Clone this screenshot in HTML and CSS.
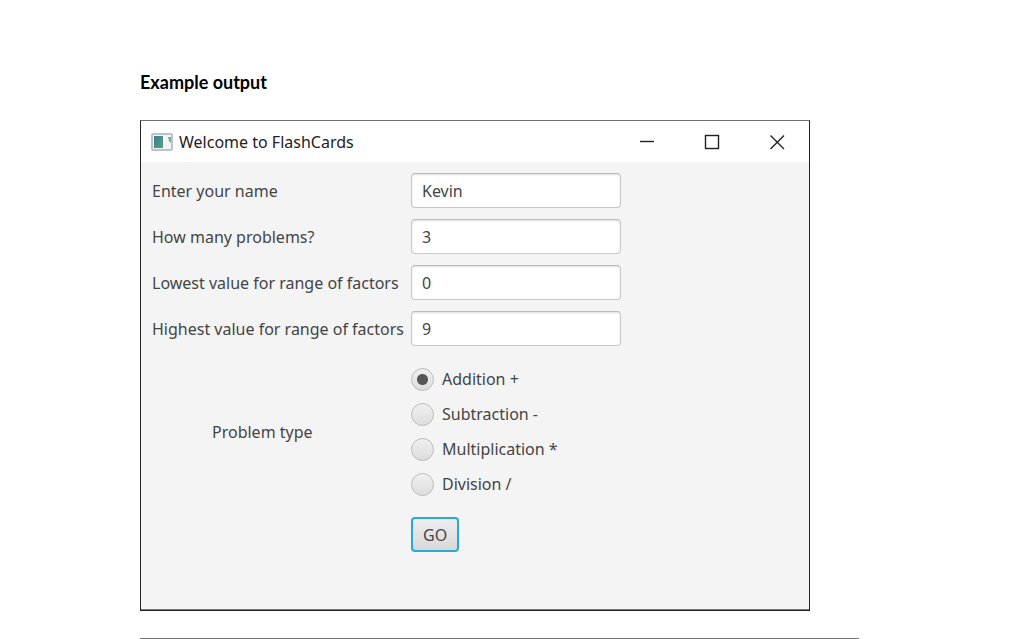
FILE: index.html
```
<!DOCTYPE html>
<html lang="en">
    <head>
        <meta charset="utf-8">
        <title>Welcome to FlashCards</title>

        <link rel="stylesheet" href="styles.css">
    </head>
    <body>
        <div id="page">
            <h1>Example output</h1>
            <div id="window">
                <div id="title_bar">
                    <svg class="app_icon" width="22" height="18" viewBox="0 0 22 18">
                        <defs>
                            <linearGradient id="screen" x1="0" y1="0" x2="1" y2="1">
                                <stop offset="0" stop-color="#3F7C91"/>
                                <stop offset="1" stop-color="#53A481"/>
                            </linearGradient>
                        </defs>
                        <rect x="1" y="1" width="20" height="16" rx="1" fill="#F1F3F5" stroke="#BCC1CA" stroke-width="2"/>
                        <rect x="3" y="3" width="9" height="12" fill="url(#screen)"/>
                        <path d="M17 4H20V10L18 8Z" fill="#6FAFA0"/>
                    </svg>
                    <span class="title">Welcome to FlashCards</span>
                    <button class="window_button" type="button" aria-label="Minimize">
                        <svg width="16" height="16" viewBox="0 0 16 16"><path d="M1 7.5H15"/></svg>
                    </button>
                    <button class="window_button" type="button" aria-label="Maximize">
                        <svg width="16" height="16" viewBox="0 0 16 16"><rect x="1.5" y="1.5" width="13" height="13"/></svg>
                    </button>
                    <button class="window_button" type="button" aria-label="Close">
                        <svg width="16" height="16" viewBox="0 0 16 16"><path d="M1.5 1.5L15 15M15 1.5L1.5 15"/></svg>
                    </button>
                </div>
                <form id="settings">
                    <label for="user_name">Enter your name</label>
                    <input class="input_item" id="user_name" type="text" value="Kevin">

                    <label for="problems">How many problems?</label>
                    <input class="input_item" id="problems" type="text" value="3">

                    <label for="lowest">Lowest value for range of factors</label>
                    <input class="input_item" id="lowest" type="text" value="0">

                    <label for="highest">Highest value for range of factors</label>
                    <input class="input_item" id="highest" type="text" value="9">

                    <span id="type_title">Problem type</span>
                    <div id="types" role="radiogroup" aria-labelledby="type_title">
                        <label><input type="radio" name="type" checked>Addition +</label>
                        <label><input type="radio" name="type">Subtraction -</label>
                        <label><input type="radio" name="type">Multiplication *</label>
                        <label><input type="radio" name="type">Division /</label>
                    </div>

                    <button id="go_button" type="button">GO</button>
                </form>
            </div>
            <hr>
        </div>
    </body>
</html>
```
FILE: styles.css
```
body {

    margin: 0;

    background: white;

    font-family: "Noto Sans", sans-serif;
    font-size: 16px;
    line-height: 24px;
    color: #444444;
}

div#page {

    max-width: 719px;

    padding: 70px 24px 0 140px;
}

h1 {

    margin: 0 0 26px;

    font-family: Lato, sans-serif;
    font-size: 18px;
    line-height: 24px;
    color: black;
}

div#window {

    max-width: 668px;

    border: 1px solid #222222;
    border-top-color: #707070;

    background: #F4F4F4;
}

div#title_bar {

    display: flex;
    align-items: center;

    height: 41px;
    padding-left: 10px;

    background: white;
    color: #222222;
}

.title {

    flex: 1;
    margin-left: 6px;
}

.window_button {

    display: flex;
    align-items: center;
    justify-content: center;

    width: 65px;
    height: 41px;
    padding: 0;

    border: none;
    background: none;
}

.window_button svg {

    fill: none;
    stroke: #222222;
    stroke-width: 1.4;
}

form#settings {

    display: grid;
    grid-template-columns: 252px minmax(0, 210px);
    gap: 11px 7px;
    align-items: center;

    padding: 11px 11px 57px;

    border-bottom: 1px solid #777777;
}

.input_item {

    box-sizing: border-box;
    width: 100%;
    height: 35px;
    padding: 0 10px;

    border: 1px solid #C8C8C8;
    border-top-color: #BBBBBB;
    border-radius: 4px;

    background: white;
    box-shadow: inset 0 1px 2px #DDDDDD;

    font: inherit;
    color: inherit;
}

span#type_title {

    margin-left: 60px;
}

div#types {

    display: grid;
    gap: 11px;

    padding: 10px 0;
}

div#types label {

    display: flex;
    align-items: center;
}

input[type="radio"] {

    appearance: none;

    width: 23px;
    height: 23px;
    margin: 0 8px 0 0;

    border: 1px solid #BBBBBB;
    border-radius: 50%;

    background: linear-gradient(to bottom, #F0F0F0, #DDDDDD);
}

input[type="radio"]:checked {

    background: radial-gradient(circle, #555555 5px, transparent 6px), linear-gradient(to bottom, #F0F0F0, #DDDDDD);
}

button#go_button {

    grid-column: 2;
    justify-self: start;

    height: 35px;
    padding: 0 10px;

    border: 2px solid #2AA9D6;
    border-radius: 4px;

    background: linear-gradient(to bottom, #EEEEEE, #D8D8D8);

    font: inherit;
    color: inherit;
}

hr {

    margin: 27px 0 0;

    border: none;
    border-top: 1px solid #777777;
}
```
